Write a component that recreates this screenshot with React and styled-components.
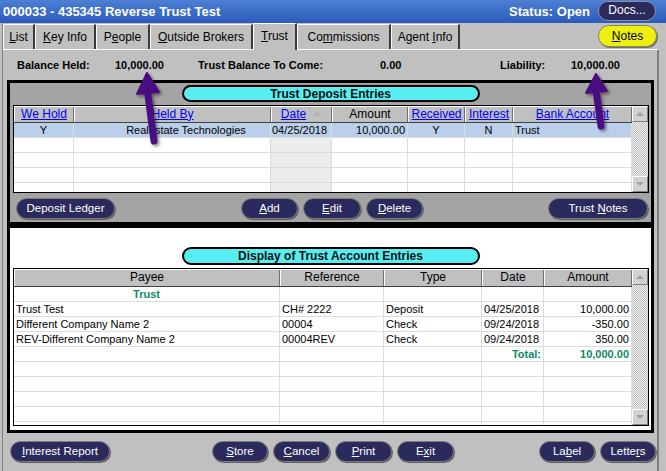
import React from "react";
import styled, { createGlobalStyle } from "styled-components";

const GlobalStyle = createGlobalStyle`
  html, body {
    margin: 0;
    padding: 0;
    background: #c0c0c0;
  }
  body {
    font-family: "Liberation Sans", Arial, sans-serif;
  }
  * {
    box-sizing: border-box;
  }
`;

// turns "&Add" into Add with the A underlined
const Mn = ({ label }) => {
  const i = label.indexOf("&");
  if (i < 0) return <span>{label}</span>;
  return (
    <span>
      {label.slice(0, i)}
      <u>{label[i + 1]}</u>
      {label.slice(i + 2)}
    </span>
  );
};

const Window = styled.div`
  position: relative;
  width: 666px;
  height: 471px;
  overflow: hidden;
  background: #c0c0c0;
  color: #000;
  font-family: "Liberation Sans", Arial, sans-serif;
`;

const TitleBar = styled.div`
  height: 23px;
  display: flex;
  align-items: center;
  padding: 0 10px 0 3px;
  background: linear-gradient(#4d7fd5, #2b5bb8);
  color: #fff;
  font-size: 13px;
  font-weight: bold;
`;

const Status = styled.span`
  margin-left: auto;
  margin-right: 8px;
`;

const DocsButton = styled.button`
  align-self: flex-start;
  width: 58px;
  height: 20px;
  margin-top: 1px;
  padding: 0 0 2px;
  border: 1px solid #8f8fa8;
  border-radius: 10px;
  background: #2a2a5c;
  color: #fff;
  font: 12px "Liberation Sans", Arial, sans-serif;
`;

const Shell = styled.div`
  margin-left: 2px;
  height: 448px;
  border-left: 1px solid #808080;
`;

const TabRow = styled.div`
  width: 655px;
  height: 27px;
  display: flex;
  align-items: flex-end;
  border-bottom: 1px solid #fff;
`;

const Tab = styled.div`
  width: ${(p) => p.$w}px;
  height: ${(p) => (p.$active ? 27 : 25)}px;
  margin-bottom: ${(p) => (p.$active ? -1 : 0)}px;
  display: flex;
  align-items: center;
  justify-content: center;
  padding-bottom: ${(p) => (p.$active ? 3 : 0)}px;
  background: #c0c0c0;
  border-top: 1px solid #fff;
  border-left: 1px solid #fff;
  border-right: 2px solid #3a3a3a;
  font-size: 12px;
  white-space: nowrap;
`;

const NotesButton = styled.button`
  align-self: flex-end;
  width: 59px;
  height: 22px;
  margin: 0 1px 2px auto;
  padding: 0;
  border: 1px solid #8a8a50;
  border-radius: 11px;
  box-shadow: 1px 1px 0 #6e6e6e;
  background: #eeee12;
  color: #000;
  font: 12px "Liberation Sans", Arial, sans-serif;
`;

const Content = styled.div`
  width: 656px;
  height: 421px;
  border-right: 2px solid #808080;
`;

const BalanceRow = styled.div`
  height: 30px;
  display: flex;
  align-items: center;
  padding-left: 14px;
  font-size: 11px;
  font-weight: bold;
`;

const BalanceCell = styled.span`
  width: ${(p) => p.$w}px;
  flex: none;
  white-space: nowrap;
`;

const Panel = styled.div`
  width: 647px;
  height: ${(p) => p.$h}px;
  margin-left: 4px;
  display: flex;
  flex-direction: column;
  border: 3px solid #000;
  background: ${(p) => p.$bg};
`;

const Banner = styled.div`
  align-self: center;
  width: 298px;
  height: ${(p) => p.$h}px;
  margin-top: ${(p) => p.$top}px;
  display: flex;
  align-items: center;
  justify-content: center;
  border: 2px solid #000;
  border-radius: 10px;
  background: #56eef0;
  color: #111;
  font-size: 12px;
  font-weight: bold;
`;

const TableFrame = styled.div`
  width: 636px;
  height: ${(p) => p.$h}px;
  margin: 3px 0 0 3px;
  display: flex;
  border: 1px solid #000;
  background: #fff;
  overflow: hidden;
`;

const TableArea = styled.div`
  width: 618px;
  flex: none;
  overflow: hidden;
`;

const Grid = styled.table`
  width: 618px;
  table-layout: fixed;
  border-collapse: separate;
  border-spacing: 0;
  font-size: 11px;
`;

const HeadRow = styled.tr`
  height: ${(p) => p.$h}px;
`;

const Th = styled.th`
  padding: 0 0 1px;
  background: #c0c0c0;
  border-bottom: 1px solid #404040;
  box-shadow: inset 1px 1px 0 #fff, inset -1px 0 0 #707070;
  font-size: 12px;
  font-weight: normal;
  text-align: center;
  white-space: nowrap;
  overflow: hidden;
`;

const HeadLink = styled.span`
  color: #0000ff;
  text-decoration: underline;
`;

const SortArrow = styled.span`
  display: inline-block;
  margin-left: 6px;
  vertical-align: 2px;
  border-left: 5px solid transparent;
  border-right: 5px solid transparent;
  border-bottom: 5px solid #b4b4b4;
`;

const Row = styled.tr`
  height: 15px;
  background: ${(p) => (p.$selected ? "#b9cfea" : "#fff")};
`;

const Td = styled.td`
  padding: ${(p) => (p.$pl != null ? `0 2px 0 ${p.$pl}px` : "0 2px")};
  line-height: 14px;
  border-right: 1px solid #dcdcdc;
  border-bottom: 1px solid #dcdcdc;
  background: ${(p) => (p.$shade ? "#ececec" : "transparent")};
  color: ${(p) => (p.$green ? "#13876a" : "#000")};
  font-weight: ${(p) => (p.$green ? "bold" : "normal")};
  text-align: ${(p) => p.$align || "left"};
  white-space: nowrap;
  overflow: hidden;
`;

const ScrollBar = styled.div`
  width: 16px;
  flex: none;
  display: flex;
  flex-direction: column;
  justify-content: space-between;
  background: repeating-conic-gradient(#bdbdbd 0 25%, #f2f2f2 0 50%) 0 0 / 2px 2px;
`;

const ScrollButton = styled.div`
  width: 16px;
  height: 16px;
  display: flex;
  align-items: center;
  justify-content: center;
  background: #d2d2d2;
  border: 1px solid;
  border-color: #fff #808080 #808080 #fff;

  &::after {
    content: "";
    border-left: 4px solid transparent;
    border-right: 4px solid transparent;
    ${(p) => (p.$down ? "border-top" : "border-bottom")}: 4px solid #a0a0a0;
  }
`;

const ButtonRow = styled.div`
  display: grid;
  grid-template-columns: 1fr auto 1fr;
  align-items: center;
  margin-top: ${(p) => p.$top}px;
  padding: ${(p) => p.$pad};
`;

const Group = styled.div`
  display: flex;
  gap: 5px;
  justify-self: ${(p) => p.$side || "center"};
`;

const PillButton = styled.button`
  width: ${(p) => p.$w}px;
  height: 21px;
  padding: 0 0 1px;
  border: 1px solid #7c7c7c;
  border-radius: 11px;
  box-shadow: 1px 1px 0 #5e5e5e;
  background: #2b2a5d;
  color: #fff;
  font: 11.5px "Liberation Sans", Arial, sans-serif;
  white-space: nowrap;
`;

const Footer = styled.div`
  height: 38px;
`;

const Overlay = styled.svg`
  position: absolute;
  left: 0;
  top: 0;
  pointer-events: none;
`;

const tabs = [
  { label: "&List", w: 32 },
  { label: "&Key Info", w: 61 },
  { label: "P&eople", w: 54 },
  { label: "&Outside Brokers", w: 103 },
  { label: "&Trust", w: 44, active: true },
  { label: "Co&mmissions", w: 94 },
  { label: "Agent &Info", w: 69 },
];

const depositCols = [60, 197, 61, 76, 57, 48, 119];

const deposits = [
  {
    weHold: "Y",
    heldBy: "Realestate Technologies",
    date: "04/25/2018",
    amount: "10,000.00",
    received: "Y",
    interest: "N",
    bank: "Trust",
    selected: true,
  },
  {}, {}, {}, {},
];

const entryCols = [266, 104, 98, 62, 88];

const entries = [
  { group: "Trust" },
  { payee: "Trust Test", ref: "CH# 2222", type: "Deposit", date: "04/25/2018", amount: "10,000.00" },
  { payee: "Different Company Name 2", ref: "00004", type: "Check", date: "09/24/2018", amount: "-350.00" },
  { payee: "REV-Different Company Name 2", ref: "00004REV", type: "Check", date: "09/24/2018", amount: "350.00" },
  { total: "10,000.00" },
  {}, {}, {}, {}, {},
];

const Arrow = ({ tail, tip, base }) => (
  <g>
    <line x1={tail[0]} y1={tail[1]} x2={(base[0][0] + base[1][0]) / 2} y2={(base[0][1] + base[1][1]) / 2 + 2} strokeWidth="7" strokeLinecap="round" />
    <polygon points={`${tip[0]},${tip[1]} ${base[0][0]},${base[0][1]} ${base[1][0]},${base[1][1]}`} strokeWidth="2" strokeLinejoin="round" />
  </g>
);

const DepositTable = () => (
  <TableFrame $h={88}>
    <TableArea>
      <Grid>
        <colgroup>
          {depositCols.map((w, i) => (
            <col key={i} style={{ width: w }} />
          ))}
        </colgroup>
        <thead>
          <HeadRow $h={17}>
            <Th><HeadLink>We Hold</HeadLink></Th>
            <Th><HeadLink>Held By</HeadLink></Th>
            <Th><HeadLink>Date</HeadLink><SortArrow /></Th>
            <Th>Amount</Th>
            <Th><HeadLink>Received</HeadLink></Th>
            <Th><HeadLink>Interest</HeadLink></Th>
            <Th><HeadLink>Bank Account</HeadLink></Th>
          </HeadRow>
        </thead>
        <tbody>
          {deposits.map((d, i) => (
            <Row key={i} $selected={d.selected}>
              <Td $align="center">{d.weHold}</Td>
              <Td $align="center" $pl={30}>{d.heldBy}</Td>
              <Td $pl={1} $shade={!d.selected}>{d.date}</Td>
              <Td $align="right">{d.amount}</Td>
              <Td $align="center">{d.received}</Td>
              <Td $align="center">{d.interest}</Td>
              <Td>{d.bank}</Td>
            </Row>
          ))}
        </tbody>
      </Grid>
    </TableArea>
    <ScrollBar>
      <ScrollButton />
      <ScrollButton $down />
    </ScrollBar>
  </TableFrame>
);

const EntriesTable = () => (
  <TableFrame $h={158}>
    <TableArea>
      <Grid>
        <colgroup>
          {entryCols.map((w, i) => (
            <col key={i} style={{ width: w }} />
          ))}
        </colgroup>
        <thead>
          <HeadRow $h={18}>
            <Th>Payee</Th>
            <Th>Reference</Th>
            <Th>Type</Th>
            <Th>Date</Th>
            <Th>Amount</Th>
          </HeadRow>
        </thead>
        <tbody>
          {entries.map((e, i) =>
            e.group ? (
              <Row key={i}>
                <Td $align="center" $green>{e.group}</Td>
                <Td /><Td /><Td /><Td />
              </Row>
            ) : e.total ? (
              <Row key={i}>
                <Td /><Td /><Td />
                <Td $align="right" $green>Total:</Td>
                <Td $align="right" $green>{e.total}</Td>
              </Row>
            ) : (
              <Row key={i}>
                <Td>{e.payee}</Td>
                <Td>{e.ref}</Td>
                <Td>{e.type}</Td>
                <Td>{e.date}</Td>
                <Td $align="right">{e.amount}</Td>
              </Row>
            )
          )}
        </tbody>
      </Grid>
    </TableArea>
    <ScrollBar>
      <ScrollButton />
      <ScrollButton $down />
    </ScrollBar>
  </TableFrame>
);

const App = () => {
  return (
    <Window>
      <GlobalStyle />
      <TitleBar>
        <span>000033 - 435345 Reverse Trust Test</span>
        <Status>Status: Open</Status>
        <DocsButton>Docs...</DocsButton>
      </TitleBar>

      <Shell>
        <TabRow>
          {tabs.map((t) => (
            <Tab key={t.label} $w={t.w} $active={t.active}>
              <Mn label={t.label} />
            </Tab>
          ))}
          <NotesButton>
            <Mn label="&Notes" />
          </NotesButton>
        </TabRow>

        <Content>
          <BalanceRow>
            <BalanceCell $w={98}>Balance Held:</BalanceCell>
            <BalanceCell $w={83}>10,000.00</BalanceCell>
            <BalanceCell $w={182}>Trust Balance To Come:</BalanceCell>
            <BalanceCell $w={120}>0.00</BalanceCell>
            <BalanceCell $w={71}>Liability:</BalanceCell>
            <BalanceCell $w={60}>10,000.00</BalanceCell>
          </BalanceRow>

          <Panel $h={145} $bg="#a4a4a4">
            <Banner $h={17} $top={2}>Trust Deposit Entries</Banner>
            <DepositTable />
            <ButtonRow $top={5} $pad="0 3px 0 6px">
              <Group $side="start">
                <PillButton $w={99}>Deposit Ledger</PillButton>
              </Group>
              <Group>
                <PillButton $w={57}><Mn label="&Add" /></PillButton>
                <PillButton $w={58}><Mn label="&Edit" /></PillButton>
                <PillButton $w={57}><Mn label="&Delete" /></PillButton>
              </Group>
              <Group $side="end">
                <PillButton $w={100}><Mn label="Trust &Notes" /></PillButton>
              </Group>
            </ButtonRow>
          </Panel>

          <Panel $h={208} $bg="#fff">
            <Banner $h={18} $top={19}>Display of Trust Account Entries</Banner>
            <EntriesTable />
          </Panel>

          <Footer>
            <ButtonRow $top={8} $pad="0 1px 0 7px">
              <Group $side="start">
                <PillButton $w={100}><Mn label="&Interest Report" /></PillButton>
              </Group>
              <Group>
                <PillButton $w={56}><Mn label="&Store" /></PillButton>
                <PillButton $w={57}><Mn label="&Cancel" /></PillButton>
                <PillButton $w={57}><Mn label="&Print" /></PillButton>
                <PillButton $w={57}><Mn label="E&xit" /></PillButton>
              </Group>
              <Group $side="end">
                <PillButton $w={56}><Mn label="La&bel" /></PillButton>
                <PillButton $w={56}><Mn label="Lette&rs" /></PillButton>
              </Group>
            </ButtonRow>
          </Footer>
        </Content>
      </Shell>

      <Overlay width="666" height="471" viewBox="0 0 666 471">
        <defs>
          <filter id="arrowShadow" x="-50%" y="-20%" width="200%" height="140%">
            <feDropShadow dx="2" dy="2" stdDeviation="1.5" floodColor="#000" floodOpacity="0.45" />
          </filter>
        </defs>
        <g filter="url(#arrowShadow)" fill="#4a0f82" stroke="#4a0f82">
          <Arrow tail={[154, 141]} tip={[147, 73]} base={[[159, 92], [137, 94]]} />
          <Arrow tail={[601, 126]} tip={[596, 74]} base={[[607, 91], [586, 93]]} />
        </g>
      </Overlay>
    </Window>
  );
};

export default App;
